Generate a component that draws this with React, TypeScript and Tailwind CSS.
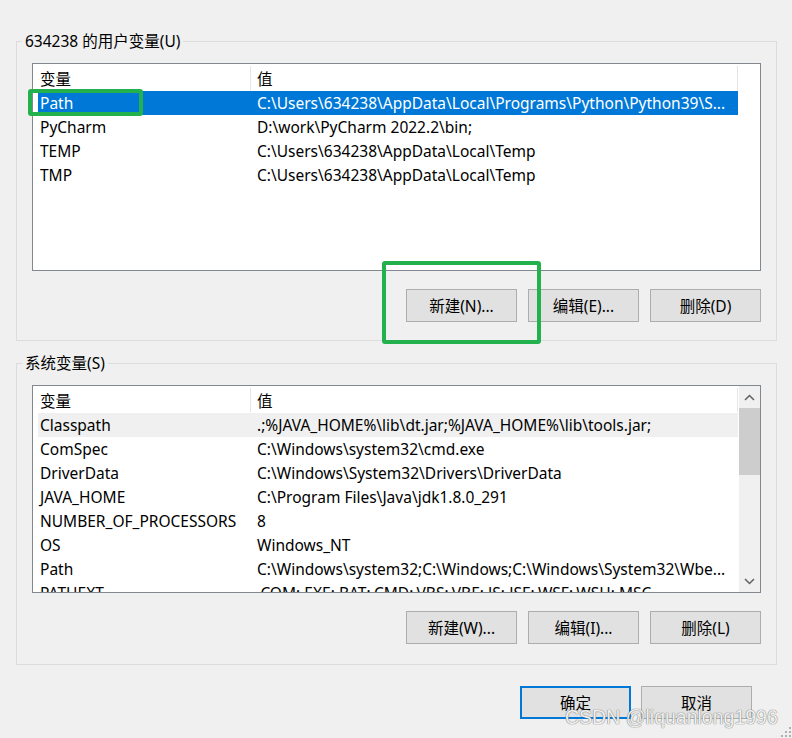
import React from "react";

type Row = { name: string; value: string };

const userRows: Row[] = [
  { name: "Path", value: String.raw`C:\Users\634238\AppData\Local\Programs\Python\Python39\S...` },
  { name: "PyCharm", value: String.raw`D:\work\PyCharm 2022.2\bin;` },
  { name: "TEMP", value: String.raw`C:\Users\634238\AppData\Local\Temp` },
  { name: "TMP", value: String.raw`C:\Users\634238\AppData\Local\Temp` },
];

const sysRows: Row[] = [
  { name: "Classpath", value: String.raw`.;%JAVA_HOME%\lib\dt.jar;%JAVA_HOME%\lib\tools.jar;` },
  { name: "ComSpec", value: String.raw`C:\Windows\system32\cmd.exe` },
  { name: "DriverData", value: String.raw`C:\Windows\System32\Drivers\DriverData` },
  { name: "JAVA_HOME", value: String.raw`C:\Program Files\Java\jdk1.8.0_291` },
  { name: "NUMBER_OF_PROCESSORS", value: "8" },
  { name: "OS", value: "Windows_NT" },
  { name: "Path", value: String.raw`C:\Windows\system32;C:\Windows;C:\Windows\System32\Wbe...` },
  { name: "PATHEXT", value: ".COM;.EXE;.BAT;.CMD;.VBS;.VBE;.JS;.JSE;.WSF;.WSH;.MSC" },
];

function Header() {
  return (
    <div className="flex h-[27px] w-[700px] shrink-0 items-center">
      <div className="w-[212px] pl-[2px] pt-[5px]">变量</div>
      <div className="flex h-[24px] flex-1 items-center border-l border-r border-[#e5e5e5] pl-[6px] pt-[5px]">值</div>
    </div>
  );
}

function RowView({ row, state }: { row: Row; state: "selected" | "hover" | "none" }) {
  const bg =
    state === "selected" ? "bg-[#0078d7] text-white" : state === "hover" ? "bg-[#f0f0f0]" : "";
  return (
    <div className={`flex h-[24px] w-[700px] shrink-0 items-center whitespace-nowrap pt-[2px] ${bg}`}>
      <div className="w-[212px] overflow-hidden pl-[2px]">{row.name}</div>
      <div className="flex-1 overflow-hidden pl-[7px]">{row.value}</div>
    </div>
  );
}

function Chevron({ up }: { up?: boolean }) {
  return (
    <svg width="11" height="7" viewBox="0 0 11 7">
      <path
        d={up ? "M1 6 L5.5 1.5 L10 6" : "M1 1 L5.5 5.5 L10 1"}
        fill="none"
        stroke="#606060"
        strokeWidth="1.5"
      />
    </svg>
  );
}

function ListBox({
  rows,
  selected,
  hover,
  scrollbar,
}: {
  rows: Row[];
  selected?: number;
  hover?: number;
  scrollbar?: boolean;
}) {
  return (
    <div className="flex h-[208px] w-[729px] overflow-hidden border border-[#828790] bg-white">
      <div className="flex flex-1 flex-col overflow-hidden pl-[5px]">
        <Header />
        {rows.map((r, i) => (
          <RowView key={i} row={r} state={i === selected ? "selected" : i === hover ? "hover" : "none"} />
        ))}
      </div>
      {scrollbar && (
        <div className="flex w-[21px] shrink-0 flex-col bg-[#f0f0f0]">
          <div className="flex h-[22px] items-center justify-center">
            <Chevron up />
          </div>
          <div className="h-[67px] bg-[#cdcdcd]" />
          <div className="flex-1" />
          <div className="flex h-[22px] items-center justify-center">
            <Chevron />
          </div>
        </div>
      )}
    </div>
  );
}

function Btn({ children, primary }: { children: React.ReactNode; primary?: boolean }) {
  return (
    <div
      className={`flex h-[33px] w-[111px] items-center justify-center bg-[#e1e1e1] pt-[2px] ${
        primary ? "border-2 border-[#0078d7]" : "border border-[#adadad]"
      }`}
    >
      {children}
    </div>
  );
}

function Group({
  title,
  rows,
  selected,
  hover,
  scrollbar,
  buttons,
  pb,
}: {
  title: string;
  rows: Row[];
  selected?: number;
  hover?: number;
  scrollbar?: boolean;
  buttons: string[];
  pb: string;
}) {
  return (
    <fieldset className={`w-[761px] border border-[#dcdcdc] px-[15px] ${pb}`}>
      <legend className="ml-[-10px] px-[3px] leading-[20px]">{title}</legend>
      <div className="mt-[12px]">
        <ListBox rows={rows} selected={selected} hover={hover} scrollbar={scrollbar} />
      </div>
      <div className="mt-[18px] flex justify-end gap-[11px]">
        {buttons.map((b) => (
          <Btn key={b}>{b}</Btn>
        ))}
      </div>
    </fieldset>
  );
}

export default function App() {
  return (
    <div className="relative h-[738px] w-[792px] overflow-hidden bg-[#f0f0f0] pl-[16px] pt-[31px] font-['Noto_Sans','Noto_Sans_CJK_SC',sans-serif] text-[15.5px] text-black">
      <Group
        title="634238 的用户变量(U)"
        rows={userRows}
        selected={0}
        buttons={["新建(N)...", "编辑(E)...", "删除(D)"]}
        pb="pb-[18px]"
      />
      <div className="mt-[12px]">
        <Group
          title="系统变量(S)"
          rows={sysRows}
          hover={0}
          scrollbar
          buttons={["新建(W)...", "编辑(I)...", "删除(L)"]}
          pb="pb-[20px]"
        />
      </div>
      <div className="mt-[21px] flex w-[736px] justify-end gap-[10px]">
        <Btn primary>确定</Btn>
        <Btn>取消</Btn>
      </div>

      {/* annotation boxes */}
      <div className="absolute left-[28px] top-[89px] h-[27px] w-[115px] rounded-[3px] border-4 border-[#22b14c]" />
      <div className="absolute left-[382px] top-[261px] h-[83px] w-[159px] rounded-[3px] border-4 border-[#22b14c]" />

      {/* watermark */}
      <div className="absolute left-[565px] top-[705px] whitespace-nowrap font-['Liberation_Sans',sans-serif] text-[19.5px] leading-[24px] text-white/90 [text-shadow:0_0_1px_#707070,0_0_1px_#707070]">
        CSDN @liquanlong1996
      </div>

      {/* resize grip */}
      <svg className="absolute bottom-0 right-0" width="12" height="12" viewBox="0 0 12 12">
        <rect x="9" y="1" width="2" height="2" fill="#b0b0b0" />
        <rect x="9" y="5" width="2" height="2" fill="#b0b0b0" />
        <rect x="5" y="5" width="2" height="2" fill="#b0b0b0" />
        <rect x="9" y="9" width="2" height="2" fill="#b0b0b0" />
        <rect x="5" y="9" width="2" height="2" fill="#b0b0b0" />
        <rect x="1" y="9" width="2" height="2" fill="#b0b0b0" />
      </svg>
    </div>
  );
}
